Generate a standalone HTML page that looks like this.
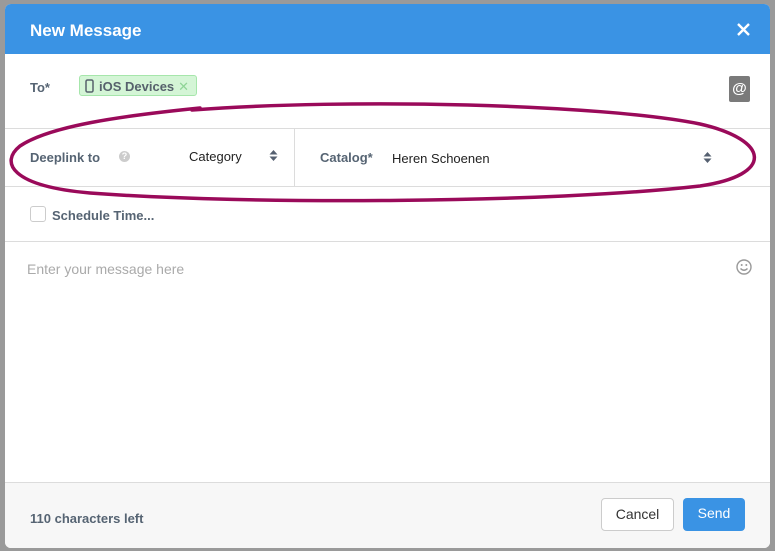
<!DOCTYPE html>
<html><head><meta charset="utf-8"><style>
*{box-sizing:border-box;margin:0;padding:0}
body{width:775px;height:551px;background:#9a9a9a;font-family:"Liberation Sans",sans-serif;position:relative;overflow:hidden}
.m{position:absolute;left:5px;top:4px;width:765px;height:544px;background:#fff;border-radius:6px;overflow:hidden}
.hd{height:50px;background:#3a93e4;color:#fff;font-weight:bold;font-size:17px;padding:17px 0 0 25px}
.x{position:absolute;right:20px;top:19px}
.lbl{position:absolute;font-size:13px;font-weight:bold;color:#566473}
.ln{position:absolute;left:0;width:765px;height:1px;background:#dcdcdc}
.tag{position:absolute;left:74px;top:71px;width:118px;height:21px;background:#d4f5d6;border:1px solid #a6e6ab;border-radius:3px;font-size:13px;font-weight:bold;color:#56616c;padding:3px 0 0 19px}
.ft{position:absolute;left:0;top:478px;width:765px;height:66px;background:#f7f7f7;border-top:1px solid #dcdcdc}
.btn{position:absolute;top:15px;height:33px;border-radius:4px;font-size:14px;text-align:center;padding-top:7px}
.ar{position:absolute;width:9px;height:13px}
</style></head><body>
<div class="m">
<div class="hd">New Message</div>
<svg class="x" width="13" height="13" viewBox="0 0 13 13"><path d="M1 1L12 12M12 1L1 12" stroke="#fff" stroke-width="2.4"/></svg>
<div class="lbl" style="left:25px;top:76px">To*</div>
<div class="tag"><svg style="position:absolute;left:5px;top:3px" width="9" height="14" viewBox="0 0 9 14"><rect x="1" y="1" width="7" height="12" rx="1.5" fill="none" stroke="#56616c" stroke-width="1.5"/></svg>iOS Devices<span style="color:#8fd496;font-weight:normal;margin-left:4px">✕</span></div>
<div style="position:absolute;left:724px;top:72px;width:21px;height:26px;background:#7a7a7a;border-radius:2px;color:#fff;font-size:15px;font-weight:bold;text-align:center;padding-top:4px">@</div>
<div class="ln" style="top:124px"></div>
<div style="position:absolute;left:289px;top:124px;width:1px;height:58px;background:#dcdcdc"></div>
<div class="lbl" style="left:25px;top:146px">Deeplink to</div>
<div style="position:absolute;left:114px;top:147px;width:11px;height:11px;border-radius:50%;background:#ccc;color:#fff;font-size:9px;font-weight:bold;text-align:center;line-height:11px">?</div>
<div style="position:absolute;left:184px;top:145px;font-size:13px;color:#222">Category</div>
<svg class="ar" style="left:264px;top:145px" viewBox="0 0 9 13"><path d="M0.5 5.5L4.5 1L8.5 5.5ZM0.5 7.5L4.5 12L8.5 7.5Z" fill="#556070"/></svg>
<div class="lbl" style="left:315px;top:146px">Catalog*</div>
<div style="position:absolute;left:387px;top:147px;font-size:13px;color:#222">Heren Schoenen</div>
<svg class="ar" style="left:698px;top:147px" viewBox="0 0 9 13"><path d="M0.5 5.5L4.5 1L8.5 5.5ZM0.5 7.5L4.5 12L8.5 7.5Z" fill="#556070"/></svg>
<div class="ln" style="top:182px"></div>
<div style="position:absolute;left:25px;top:202px;width:16px;height:16px;border:1px solid #ccc;border-radius:3px"></div>
<div class="lbl" style="left:47px;top:204px">Schedule Time...</div>
<div class="ln" style="top:237px"></div>
<div style="position:absolute;left:22px;top:257px;font-size:14px;color:#aaa">Enter your message here</div>
<svg style="position:absolute;left:731px;top:255px" width="16" height="16" viewBox="0 0 16 16"><circle cx="8" cy="8" r="7" fill="none" stroke="#999" stroke-width="1.4"/><circle cx="5.7" cy="6" r="1" fill="#999"/><circle cx="10.3" cy="6" r="1" fill="#999"/><path d="M4.5 9.5Q8 13 11.5 9.5" fill="none" stroke="#999" stroke-width="1.4"/></svg>
<div class="ft">
<div class="lbl" style="left:25px;top:28px">110 characters left</div>
<div class="btn" style="left:596px;width:73px;background:#fff;border:1px solid #ccc;color:#333">Cancel</div>
<div class="btn" style="left:678px;width:62px;background:#3a93e4;color:#fff">Send</div>
</div>
</div>
<svg style="position:absolute;left:0;top:0" width="775" height="551"><path d="M192 110 C350 98 600 104 700 124 C770 140 775 175 700 186 C550 203 250 205 90 193 C10 186 0 162 20 146 C50 126 120 116 200 108" fill="none" stroke="#9a0a5a" stroke-width="3.5" stroke-linecap="round"/></svg>
</body></html>
